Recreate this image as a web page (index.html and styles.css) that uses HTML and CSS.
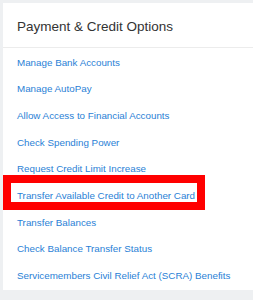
FILE: index.html
```html
<!DOCTYPE html>
<html>
<head>
    <link rel="stylesheet" href="styles.css">
</head>
<body>
    <div class="card">
        <h2 class="card-title">Payment &amp; Credit Options</h2>
        <ul class="options">
            <li><a href="#">Manage Bank Accounts</a></li>
            <li><a href="#">Manage AutoPay</a></li>
            <li><a href="#">Allow Access to Financial Accounts</a></li>
            <li><a href="#">Check Spending Power</a></li>
            <li><a href="#">Request Credit Limit Increase</a></li>
            <li><a href="#">Transfer Available Credit to Another Card</a></li>
            <li><a href="#">Transfer Balances</a></li>
            <li><a href="#">Check Balance Transfer Status</a></li>
            <li><a href="#">Servicemembers Civil Relief Act (SCRA) Benefits</a></li>
        </ul>
        <div class="highlight"></div>
    </div>
</body>
</html>
```

FILE: styles.css
```css
body {
    margin: 0;
    padding: 3px 0 11px 3px;
    background: #eef0f2;
    font-family: "Liberation Sans", Arial, sans-serif;
}
.card {
    background: white;
    position: relative;
    padding-bottom: 0.5px;
}
.card-title {
    margin: 0;
    height: 41px;
    padding-top: 3px;
    line-height: 41px;
    padding-left: 14px;
    font-size: 13.5px;
    font-weight: normal;
    color: #333;
    border-bottom: 1px solid #ececec;
}
.options {
    list-style: none;
    margin: 0;
    padding: 1.5px 0 0 14px;
}
.options li {
    line-height: 26.67px;
    font-size: 9.8px;
}
.options a {
    color: #2a81d6;
    text-decoration: none;
}
.highlight {
    position: absolute;
    left: 0;
    top: 172px;
    width: 186px;
    height: 19px;
    border: 8px solid #ff0000;
    pointer-events: none;
}
```
